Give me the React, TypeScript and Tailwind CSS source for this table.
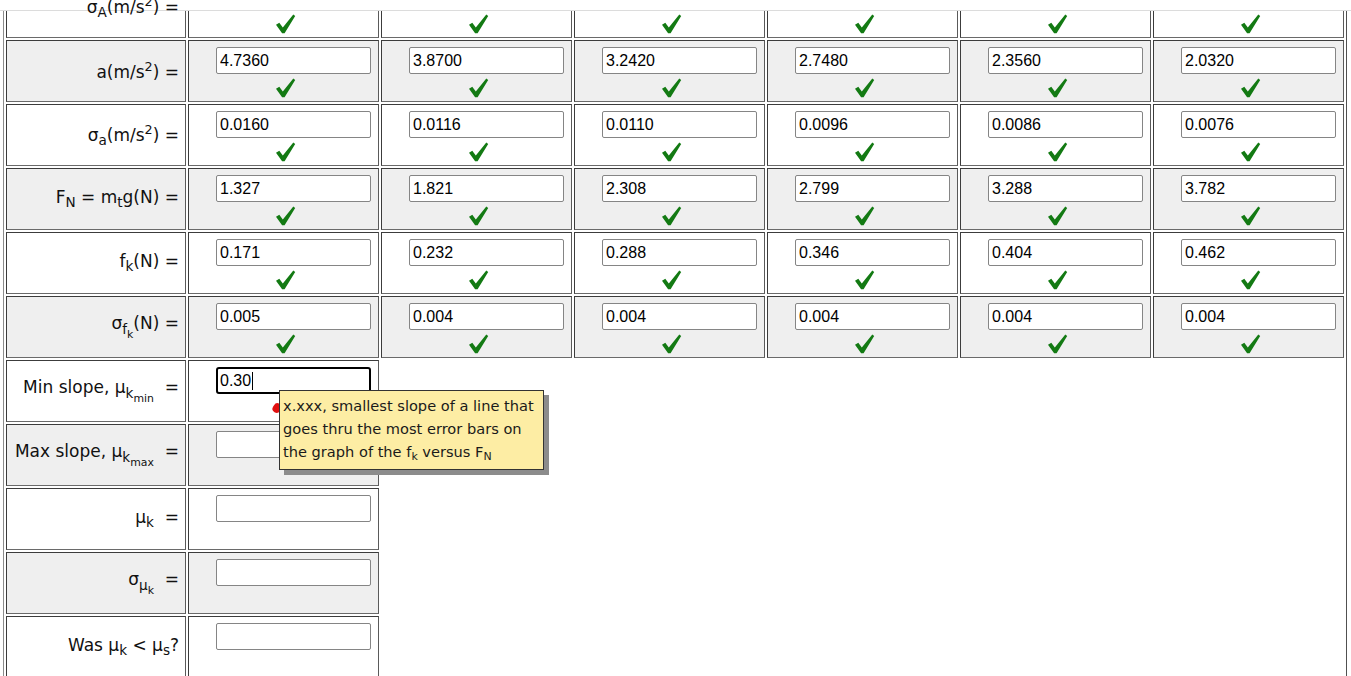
import React from "react";

const Check = () => (
  <svg width="21" height="20" viewBox="0 0 21 20" className="block">
    <path
      d="M1 10.8 L4.3 8.7 L7.8 13.4 L18.3 0.6 L20.2 1.9 L9.6 19.3 L7.1 19.3 Z"
      fill="#137a13"
    />
  </svg>
);

const S = ({ children }: { children: React.ReactNode }) => (
  <sub className="static align-sub text-[80%] leading-[normal]">{children}</sub>
);
const P = ({ children }: { children: React.ReactNode }) => (
  <sup className="static align-super text-[75%] leading-[normal]">{children}</sup>
);

type Row = {
  label: React.ReactNode;
  values: string[];
  gray: boolean;
  checks: boolean;
  top?: boolean;
  focused?: boolean;
};

const rows: Row[] = [
  {
    label: (
      <>
        σ<S>A</S>(m/s<P>2</P>) =
      </>
    ),
    values: ["0.0240", "0.0200", "0.0180", "0.0160", "0.0140", "0.0120"],
    gray: false,
    checks: true,
    top: true,
  },
  {
    label: (
      <>
        a(m/s<P>2</P>) =
      </>
    ),
    values: ["4.7360", "3.8700", "3.2420", "2.7480", "2.3560", "2.0320"],
    gray: true,
    checks: true,
  },
  {
    label: (
      <>
        σ<S>a</S>(m/s<P>2</P>) =
      </>
    ),
    values: ["0.0160", "0.0116", "0.0110", "0.0096", "0.0086", "0.0076"],
    gray: false,
    checks: true,
  },
  {
    label: (
      <>
        F<S>N</S> = m<S>t</S>g(N) =
      </>
    ),
    values: ["1.327", "1.821", "2.308", "2.799", "3.288", "3.782"],
    gray: true,
    checks: true,
  },
  {
    label: (
      <>
        f<S>k</S>(N) =
      </>
    ),
    values: ["0.171", "0.232", "0.288", "0.346", "0.404", "0.462"],
    gray: false,
    checks: true,
  },
  {
    label: (
      <>
        σ
        <S>
          f<S>k</S>
        </S>
        (N) =
      </>
    ),
    values: ["0.005", "0.004", "0.004", "0.004", "0.004", "0.004"],
    gray: true,
    checks: true,
  },
  {
    label: (
      <>
        Min slope, μ
        <S>
          k<S>min</S>
        </S>
        &nbsp; =
      </>
    ),
    values: ["0.30"],
    gray: false,
    checks: false,
    focused: true,
  },
  {
    label: (
      <>
        Max slope, μ
        <S>
          k<S>max</S>
        </S>
        &nbsp; =
      </>
    ),
    values: [""],
    gray: true,
    checks: false,
  },
  {
    label: (
      <>
        μ<S>k</S>&nbsp; =
      </>
    ),
    values: [""],
    gray: false,
    checks: false,
  },
  {
    label: (
      <>
        σ
        <S>
          μ<S>k</S>
        </S>
        &nbsp; =
      </>
    ),
    values: [""],
    gray: true,
    checks: false,
  },
  {
    label: (
      <>
        Was μ<S>k</S> &lt; μ<S>s</S>?
      </>
    ),
    values: [""],
    gray: false,
    checks: false,
  },
];

const cellBorder =
  "border border-t-[#3c3c3c] border-l-[#3c3c3c] border-r-[#5a5a5a] border-b-[#6a6a6a]";

export default function App() {
  return (
    <div className="relative h-[676px] w-[1351px] overflow-hidden bg-white font-[family-name:'DejaVu_Sans',sans-serif] text-[#111]">
      <div className="-mt-[27px] pl-[3px]">
        <table className="border-separate border-spacing-[2px] border border-t-[#a0a0a0] border-l-[#8c8c8c] border-r-[#505050] border-b-[#505050]">
          <tbody>
            {rows.map((r, i) => (
              <tr key={i}>
                <td
                  className={`${cellBorder} h-[62px] w-[180px] pr-[6px] text-right align-middle text-[17px] leading-[normal] whitespace-nowrap ${
                    r.gray ? "bg-[#efefef]" : "bg-white"
                  }`}
                >
                  <span className={r.top ? "relative z-20" : ""}>{r.label}</span>
                </td>
                {r.values.map((v, j) => (
                  <td
                    key={j}
                    className={`${cellBorder} h-[62px] w-[191px] pt-[6px] align-top ${
                      r.gray ? "bg-[#efefef]" : "bg-white"
                    }`}
                  >
                    <div className="pl-[27px]">
                      {r.focused ? (
                        <div className="flex h-[27px] w-[155px] items-center rounded-[3px] border-2 border-black bg-white pl-[2px] font-[family-name:'Liberation_Sans',Arial,sans-serif] text-[16px] text-black">
                          <span>{v}</span>
                          <span className="ml-[1px] h-[18px] w-px bg-black" />
                        </div>
                      ) : (
                        <input
                          readOnly
                          value={v}
                          className="block h-[27px] w-[155px] rounded-[2px] border border-[#858585] bg-white px-[3px] font-[family-name:'Liberation_Sans',Arial,sans-serif] text-[16px] text-black outline-none"
                        />
                      )}
                    </div>
                    {r.checks && (
                      <div className="mt-[4px] flex justify-center pl-[4px]">
                        <Check />
                      </div>
                    )}
                  </td>
                ))}
              </tr>
            ))}
          </tbody>
        </table>
      </div>

      {/* fixed top strip */}
      <div className="absolute left-0 right-0 top-0 z-10 h-[11px] border-b border-[#dcdcdc] bg-white" />

      {/* red marker under tooltip */}
      <div className="absolute left-[273px] top-[403px] h-[10px] w-[8px] rotate-[30deg] rounded-full bg-[#e01010]" />

      {/* tooltip */}
      <div className="absolute left-[279px] top-[390px] h-[80px] w-[265px] border border-[#333] bg-[#fdeda4] pl-[3px] pt-[3px] text-[14.6px] leading-[23px] text-[#1a1a1a] shadow-[5px_5px_0_0_#8c8c8c] whitespace-nowrap">
        x.xxx, smallest slope of a line that
        <br />
        goes thru the most error bars on
        <br />
        the graph of the f<sub>k</sub> versus F<sub>N</sub>
      </div>
    </div>
  );
}
